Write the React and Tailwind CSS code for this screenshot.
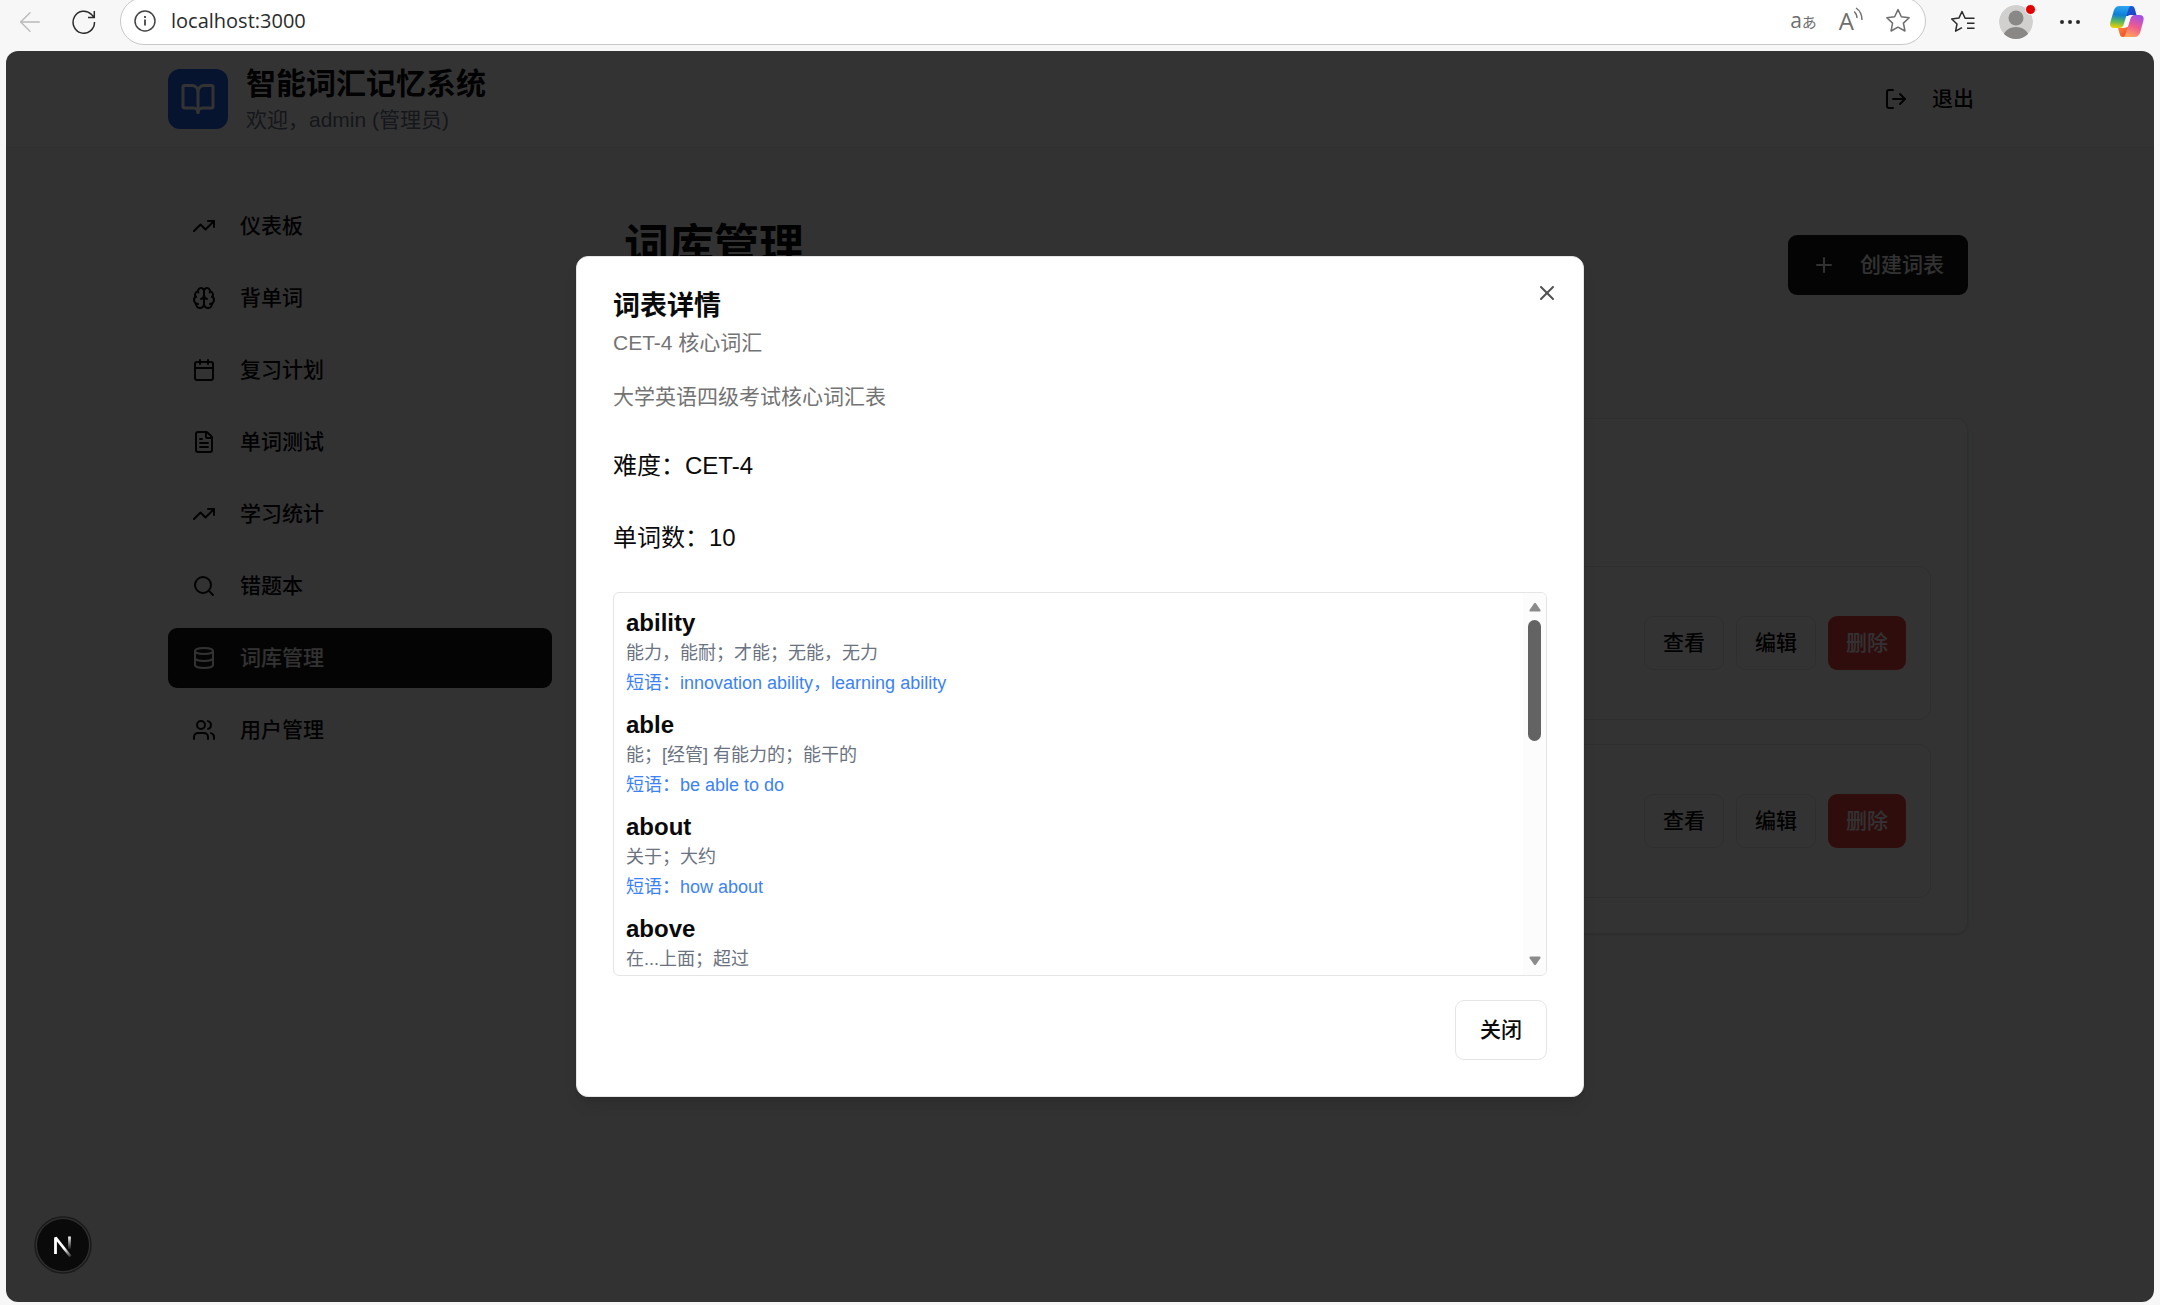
import React, { useState } from 'react';
import {
  ArrowLeft,
  BookOpen,
  Brain,
  Calendar,
  Database,
  FileText,
  LogOut,
  Plus,
  Search,
  TrendingUp,
  Users,
  X,
} from 'lucide-react';

const navItems = [
  { id: 'dashboard', label: '仪表板', icon: TrendingUp },
  { id: 'study', label: '背单词', icon: Brain },
  { id: 'review', label: '复习计划', icon: Calendar },
  { id: 'test', label: '单词测试', icon: FileText },
  { id: 'stats', label: '学习统计', icon: TrendingUp },
  { id: 'mistakes', label: '错题本', icon: Search },
  { id: 'vocabulary', label: '词库管理', icon: Database },
  { id: 'users', label: '用户管理', icon: Users },
];

const words = [
  { word: 'ability', meaning: '能力，能耐；才能；无能，无力', phrase: 'innovation ability，learning ability' },
  { word: 'able', meaning: '能；[经管] 有能力的；能干的', phrase: 'be able to do' },
  { word: 'about', meaning: '关于；大约', phrase: 'how about' },
  { word: 'above', meaning: '在...上面；超过' },
];

function CopilotLogo() {
  return (
    <svg viewBox="0 0 34 31" className="h-[31px] w-[34px]" aria-hidden="true">
      <defs>
        <linearGradient id="cpLeft" x1="0.4" y1="0" x2="0.3" y2="1">
          <stop offset="0" stopColor="#2aa5f0" />
          <stop offset="0.4" stopColor="#0d7fd6" />
          <stop offset="0.7" stopColor="#5cb85c" />
          <stop offset="1" stopColor="#f5d000" />
        </linearGradient>
        <linearGradient id="cpTop" x1="0" y1="0" x2="1" y2="1">
          <stop offset="0" stopColor="#1b62dc" />
          <stop offset="1" stopColor="#1b3fc0" />
        </linearGradient>
        <linearGradient id="cpRight" x1="0.7" y1="0" x2="0.3" y2="1">
          <stop offset="0" stopColor="#a150e8" />
          <stop offset="0.5" stopColor="#ef5a90" />
          <stop offset="1" stopColor="#ffa45a" />
        </linearGradient>
        <linearGradient id="cpBottom" x1="0" y1="0" x2="1" y2="1">
          <stop offset="0" stopColor="#ff8a3c" />
          <stop offset="1" stopColor="#e8402a" />
        </linearGradient>
      </defs>
      <path d="M17 0h4.500c2 0 2.800 1.200 3.300 3l1.700 6h-4.500c-2 0-3 .2-4 1l-3 0z" fill="url(#cpTop)" />
      <path d="M17.500 31H13c-2 0-2.800-1.200-3.300-3L8 22h4c2 0 3-.2 4-1h3z" fill="url(#cpBottom)" />
      <path d="M9.500 0H21.500c-1.800 0-2.600 1.500-3.200 3.500L13.800 18c-.8 2.700-2 4-4.500 4H4c-3.500 0-4.600-2.500-3.600-6L3.700 5C4.700 1.700 6.500 0 9.500 0z" fill="url(#cpLeft)" />
      <path d="M24.500 31H12.500c1.800 0 2.600-1.500 3.200-3.500L20.200 13c.8-2.700 2-4 4.500-4h5c3.500 0 4.600 2.500 3.600 6l-3 11c-1 3.300-2.800 5-5.800 5z" fill="url(#cpRight)" />
      <path d="M20 9.500h2.800c-1.600.8-2.200 2-2.700 3.800l-1.800 6c-.5 1.500-1.300 2.200-2.800 2.200h-3c1.300-.6 1.900-1.800 2.300-3.200l2-6.300c.5-1.600 1.400-2.500 3.200-2.500z" fill="#fafafa" />
    </svg>
  );
}

function BrowserBar() {
  return (
    <div className="flex h-[51px] items-start pr-4 pl-[14px] text-[#2b2b2b]">
      <div className="flex h-[43px] w-[106px] shrink-0 items-center gap-[26px]">
        <button aria-label="后退" className="text-[#b9b9b9]">
          <ArrowLeft className="h-8 w-8" strokeWidth={1} />
        </button>
        <button aria-label="刷新">
          <svg viewBox="0 0 24 24" className="h-6 w-6" fill="none" stroke="currentColor" strokeWidth="1.500">
            <path d="M22.500 12A10.700 11 0 1 1 19.500 4.600L22.300 7.500M22.300 1v6.500H16" />
          </svg>
        </button>
      </div>

      <div className="-mt-[3px] flex h-12 min-w-0 flex-1 items-center rounded-full border border-[#c8c8c8] bg-white pr-[14px] pl-3">
        <svg viewBox="0 0 24 24" className="h-6 w-6" fill="none" stroke="#444" strokeWidth="1.500" aria-hidden="true">
          <circle cx="12" cy="12" r="10" />
          <path d="M12 10.500V16.500M12 7v2" strokeWidth="1.800" />
        </svg>
        <input
          aria-label="地址栏"
          readOnly
          value="localhost:3000"
          className="ml-[14px] min-w-0 flex-1 bg-transparent font-['Open_Sans','Noto_Sans_CJK_SC',sans-serif] text-[20px] outline-none"
        />
        <div className="flex items-center gap-[22px] text-[#6e6e6e]">
          <button aria-label="翻译" className="flex items-baseline font-['Open_Sans','Noto_Sans_CJK_JP',sans-serif]">
            <span className="text-[21px] leading-6">a</span>
            <span className="text-[15px] leading-6">あ</span>
          </button>
          <button aria-label="朗读" className="flex items-start font-['Open_Sans',sans-serif]">
            <span className="text-[24px] leading-7">A</span>
            <svg viewBox="0 0 9 14" className="h-[14px] w-[9px]" fill="none" stroke="currentColor" strokeWidth="1.400">
              <path d="M0 4.500Q3 7 3 11M2 1Q8 5 8 13" />
            </svg>
          </button>
          <button aria-label="收藏">
            <svg viewBox="0 0 24 24" className="h-[26px] w-[26px]" fill="none" stroke="currentColor" strokeWidth="1.400" strokeLinejoin="round">
              <path d="M12 1.500l3.100 6.600 7.200.9-5.300 5 1.400 7.200L12 17.700l-6.400 3.500L7 14 1.700 9l7.200-.9z" />
            </svg>
          </button>
        </div>
      </div>

      <div className="flex h-[43px] shrink-0 items-center">
        <button aria-label="收藏夹" className="ml-6">
          <svg viewBox="0 0 26 24" className="h-[26px] w-[26px]" fill="none" stroke="currentColor" strokeWidth="1.500" strokeLinejoin="round">
            <path d="M24.500 8.300h-9.400l-3.100-6.800-3.100 6.600L1.700 9 7 14l-1.400 7.200L12 17.700M17 13.300h7.500M17 18.300h7.500" />
          </svg>
        </button>
        <button aria-label="用户" className="relative ml-[23px]">
          <svg viewBox="0 0 34 34" className="h-[34px] w-[34px]">
            <clipPath id="avatarClip">
              <circle cx="17" cy="17" r="17" />
            </clipPath>
            <g clipPath="url(#avatarClip)">
              <circle cx="17" cy="17" r="17" fill="#d2d0ce" />
              <circle cx="17" cy="13" r="7.500" fill="#8a8886" />
              <ellipse cx="17" cy="33" rx="13" ry="11" fill="#8a8886" />
            </g>
          </svg>
          <span className="absolute -top-px -right-[3px] h-[11px] w-[11px] rounded-full border border-white bg-[#e30000]" />
        </button>
        <button aria-label="更多" className="ml-[26px]">
          <svg viewBox="0 0 22 6" className="h-[6px] w-[22px]" fill="currentColor">
            <circle cx="3" cy="3" r="2" />
            <circle cx="11" cy="3" r="2" />
            <circle cx="19" cy="3" r="2" />
          </svg>
        </button>
        <button aria-label="Copilot" className="ml-[29px]">
          <CopilotLogo />
        </button>
      </div>
    </div>
  );
}

function Header() {
  return (
    <header className="border-b border-[#eeeeee] bg-white">
      <div className="mx-auto flex max-w-[1920px] items-center justify-between px-12 py-3">
        <div className="flex items-center gap-[18px]">
          <div className="flex h-[60px] w-[60px] items-center justify-center rounded-xl bg-[#2563eb]">
            <BookOpen className="h-9 w-9 text-white" />
          </div>
          <div>
            <h1 className="text-[30px] leading-[42px] font-bold">智能词汇记忆系统</h1>
            <p className="text-[21px] leading-[30px] text-gray-500">欢迎，admin (管理员)</p>
          </div>
        </div>
        <button className="flex h-[54px] items-center gap-6 px-[18px] text-[21px] font-medium">
          <LogOut className="h-6 w-6" />
          退出
        </button>
      </div>
    </header>
  );
}

function Sidebar({ active, onSelect }) {
  return (
    <nav className="flex w-96 shrink-0 flex-col gap-3">
      {navItems.map(({ id, label, icon: Icon }) => (
        <button
          key={id}
          onClick={() => onSelect(id)}
          className={`flex h-[60px] items-center gap-6 rounded-[9px] px-6 text-[21px] font-medium ${
            active === id ? 'bg-neutral-900 text-neutral-50' : ''
          }`}
        >
          <Icon className="h-6 w-6" />
          {label}
        </button>
      ))}
    </nav>
  );
}

function ListRow() {
  return (
    <div className="flex h-[154px] items-center justify-end gap-3 rounded-xl border border-neutral-200 px-6">
      <button className="h-[54px] rounded-[9px] border border-neutral-200 px-[18px] text-[21px] font-medium">查看</button>
      <button className="h-[54px] rounded-[9px] border border-neutral-200 px-[18px] text-[21px] font-medium">编辑</button>
      <button className="h-[54px] rounded-[9px] bg-[#ef4444] px-[18px] text-[21px] font-medium text-neutral-50">
        删除
      </button>
    </div>
  );
}

function ScrollBar() {
  return (
    <div className="flex w-[23px] shrink-0 flex-col items-center bg-[#fcfcfc] py-[9px]" aria-hidden="true">
      <svg viewBox="0 0 12 10" className="h-[10px] w-3">
        <path d="M5 1.500Q6 0 7 1.500L11.500 8Q12 9.500 10.500 9.500h-9Q0 9.500.5 8z" fill="#8b8b8b" />
      </svg>
      <div className="mt-2 h-[121px] w-[13px] rounded-full bg-[#636363]" />
      <svg viewBox="0 0 12 10" className="mt-auto h-[10px] w-3">
        <path d="M5 8.500Q6 10 7 8.500L11.500 2Q12 .5 10.500.5h-9Q0 .5.5 2z" fill="#8b8b8b" />
      </svg>
    </div>
  );
}

function WordListDialog({ onClose }) {
  return (
    <div
      role="dialog"
      aria-labelledby="dialog-title"
      className="relative w-full max-w-[1008px] rounded-xl border border-neutral-200 bg-white p-9 shadow-lg"
    >
      <h2 id="dialog-title" className="text-[27px] leading-[27px] font-semibold">
        词表详情
      </h2>
      <p className="mt-2 text-[21px] leading-[30px] text-[#737373]">CET-4 核心词汇</p>
      <p className="mt-6 text-[21px] leading-[30px] text-[#737373]">大学英语四级考试核心词汇表</p>
      <p className="mt-9 text-2xl leading-9">难度：CET-4</p>
      <p className="mt-9 text-2xl leading-9">单词数：10</p>

      <div className="mt-9 flex h-96 overflow-hidden rounded-md border border-neutral-200">
        <ul className="flex min-w-0 flex-1 flex-col gap-3 overflow-hidden p-3">
          {words.map(({ word, meaning, phrase }) => (
            <li key={word} className="shrink-0">
              <div className="text-2xl leading-9 font-bold">{word}</div>
              <div className="text-lg leading-6 text-[#6b7280]">{meaning}</div>
              {phrase && <div className="mt-[6px] text-lg leading-6 text-[#3b82f6]">短语：{phrase}</div>}
            </li>
          ))}
        </ul>
        <ScrollBar />
      </div>

      <div className="mt-6 flex justify-end">
        <button
          onClick={onClose}
          className="h-[60px] rounded-[9px] border border-neutral-200 px-6 text-[21px] font-medium"
        >
          关闭
        </button>
      </div>

      <button onClick={onClose} aria-label="Close" className="absolute top-6 right-6 opacity-70">
        <X className="h-6 w-6" />
      </button>
    </div>
  );
}

function DevBadge() {
  return (
    <button aria-label="Next.js" className="absolute bottom-[28px] left-[28px] rounded-full">
      <svg viewBox="0 0 58 58" className="h-[58px] w-[58px]" fill="none">
        <defs>
          <linearGradient id="nDiag" x1="31" y1="32" x2="37" y2="41" gradientUnits="userSpaceOnUse">
            <stop stopColor="#fff" />
            <stop offset="1" stopColor="#fff" stopOpacity="0.1" />
          </linearGradient>
          <linearGradient id="nStem" x1="0" y1="20" x2="0" y2="34" gradientUnits="userSpaceOnUse">
            <stop stopColor="#fff" />
            <stop offset="1" stopColor="#fff" stopOpacity="0" />
          </linearGradient>
        </defs>
        <circle cx="29" cy="29" r="28" fill="#303030" stroke="#1b1b1b" strokeWidth="1.500" />
        <circle cx="29" cy="29" r="26" fill="#0a0a0a" />
        <path d="M21.500 38V21.500L36.500 40.500" stroke="url(#nDiag)" strokeWidth="2.800" strokeLinejoin="bevel" />
        <path d="M35.500 20.500V33" stroke="url(#nStem)" strokeWidth="2.800" />
      </svg>
    </button>
  );
}

export default function App() {
  const [active, setActive] = useState('vocabulary');
  const [open, setOpen] = useState(true);

  return (
    <div className="flex min-h-screen flex-col bg-[#f7f7f7] font-['Liberation_Sans','Noto_Sans_CJK_SC',sans-serif] text-neutral-950">
      <BrowserBar />

      <div className="relative mx-[6px] mb-[3px] flex flex-1 flex-col overflow-hidden rounded-xl bg-gray-50">
        <Header />

        <div className="mx-auto flex w-full max-w-[1920px] gap-12 px-12 py-12">
          <Sidebar active={active} onSelect={setActive} />

          <main className="min-w-0 flex-1 p-6">
            <div className="flex h-[90px] items-center justify-between">
              <h2 className="self-start text-[45px] leading-[54px] font-bold">词库管理</h2>
              <button className="flex h-[60px] items-center gap-6 rounded-[9px] bg-neutral-900 px-6 text-[21px] font-medium text-neutral-50">
                <Plus className="h-6 w-6" />
                创建词表
              </button>
            </div>

            <section className="mt-[108px] flex flex-col gap-6 rounded-xl border border-neutral-200 bg-white px-9 pt-[147px] pb-[35px] shadow-sm">
              <ListRow />
              <ListRow />
            </section>
          </main>
        </div>

        {open && (
          <div className="absolute inset-0 flex items-center justify-center bg-black/80">
            <WordListDialog onClose={() => setOpen(false)} />
          </div>
        )}
        <DevBadge />
      </div>
    </div>
  );
}
